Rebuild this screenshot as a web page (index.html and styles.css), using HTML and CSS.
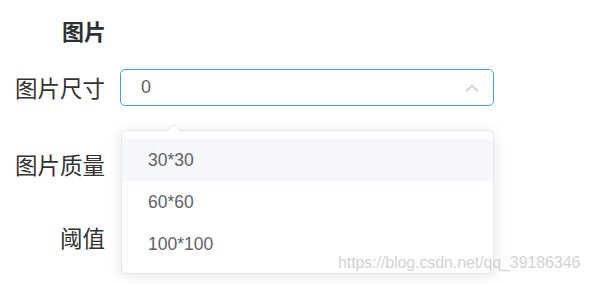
FILE: index.html
```html
<!DOCTYPE html>
<html>
<head>
<meta charset="utf-8">
<link rel="stylesheet" href="styles.css">
</head>
<body>
<div class="page">
  <div class="title">图片</div>
  <div class="form">
    <div class="row">
      <div class="label">图片尺寸</div>
      <div class="select">
        <div class="input">
          <span class="value">0</span>
          <svg class="arrow" width="14" height="8" viewBox="0 0 14 8"><polyline points="1,7.5 7,1.5 13,7.5" fill="none" stroke="#c0c4cc" stroke-width="1.2"/></svg>
        </div>
        <div class="dropdown">
          <span class="caret"></span>
          <ul class="options">
            <li class="option hover">30*30</li>
            <li class="option">60*60</li>
            <li class="option">100*100</li>
          </ul>
        </div>
      </div>
    </div>
    <div class="row">
      <div class="label">图片质量</div>
    </div>
    <div class="row row-tight">
      <div class="label">阈值</div>
    </div>
  </div>
  <div class="watermark">https://blog.csdn.net/qq_39186346</div>
</div>
</body>
</html>
```
FILE: styles.css
```css
html, body {
  margin: 0;
  padding: 0;
  background: #fff;
}
.page {
  position: relative;
  width: 591px;
  height: 284px;
  overflow: hidden;
  padding-top: 18px;
  box-sizing: border-box;
  font-family: "Liberation Sans", "Noto Sans CJK SC", sans-serif;
}
.title {
  margin-left: 62px;
  font-family: "Noto Sans CJK SC", sans-serif;
  font-size: 22px;
  font-weight: bold;
  line-height: 24px;
  color: #303133;
}
.form {
  margin-top: 27px;
}
.row {
  display: flex;
  align-items: center;
  height: 37px;
  margin-bottom: 40px;
}
.row-tight {
  margin-top: -4px;
}
.label {
  width: 105px;
  margin-right: 15px;
  text-align: right;
  font-family: "Noto Sans CJK SC", sans-serif;
  font-size: 22.5px;
  color: #333333;
  line-height: 37px;
}
.select {
  position: relative;
  width: 374px;
  height: 37px;
}
.input {
  box-sizing: border-box;
  height: 37px;
  border: 1px solid #409eff;
  border-radius: 5px;
  display: flex;
  align-items: center;
  justify-content: space-between;
  padding: 0 14px 0 20px;
}
.value {
  font-size: 18px;
  color: #606266;
}
.arrow {
  display: block;
  margin-top: 1px;
}
.dropdown {
  position: absolute;
  left: 1px;
  top: 61px;
  width: 373px;
  box-sizing: border-box;
  background: #fff;
  border: 1px solid #e4e7ed;
  border-radius: 5px;
  box-shadow: 0 2px 14px 0 rgba(0, 0, 0, 0.1);
  z-index: 2;
}
.caret {
  position: absolute;
  left: 45px;
  top: -7px;
  width: 0;
  height: 0;
  border-left: 7px solid transparent;
  border-right: 7px solid transparent;
  border-bottom: 7px solid #e4e7ed;
}
.caret::after {
  content: "";
  position: absolute;
  left: -6px;
  top: 1px;
  border-left: 6px solid transparent;
  border-right: 6px solid transparent;
  border-bottom: 6px solid #fff;
}
.options {
  list-style: none;
  margin: 0;
  padding: 8px 0;
}
.option {
  height: 42px;
  line-height: 42px;
  padding-left: 26px;
  font-size: 17.5px;
  color: #606266;
}
.option.hover {
  background: #f5f7fa;
}
.watermark {
  position: absolute;
  left: 338px;
  top: 254px;
  font-size: 16px;
  color: #d2d2d2;
  z-index: 3;
  letter-spacing: -0.1px;
}
```
